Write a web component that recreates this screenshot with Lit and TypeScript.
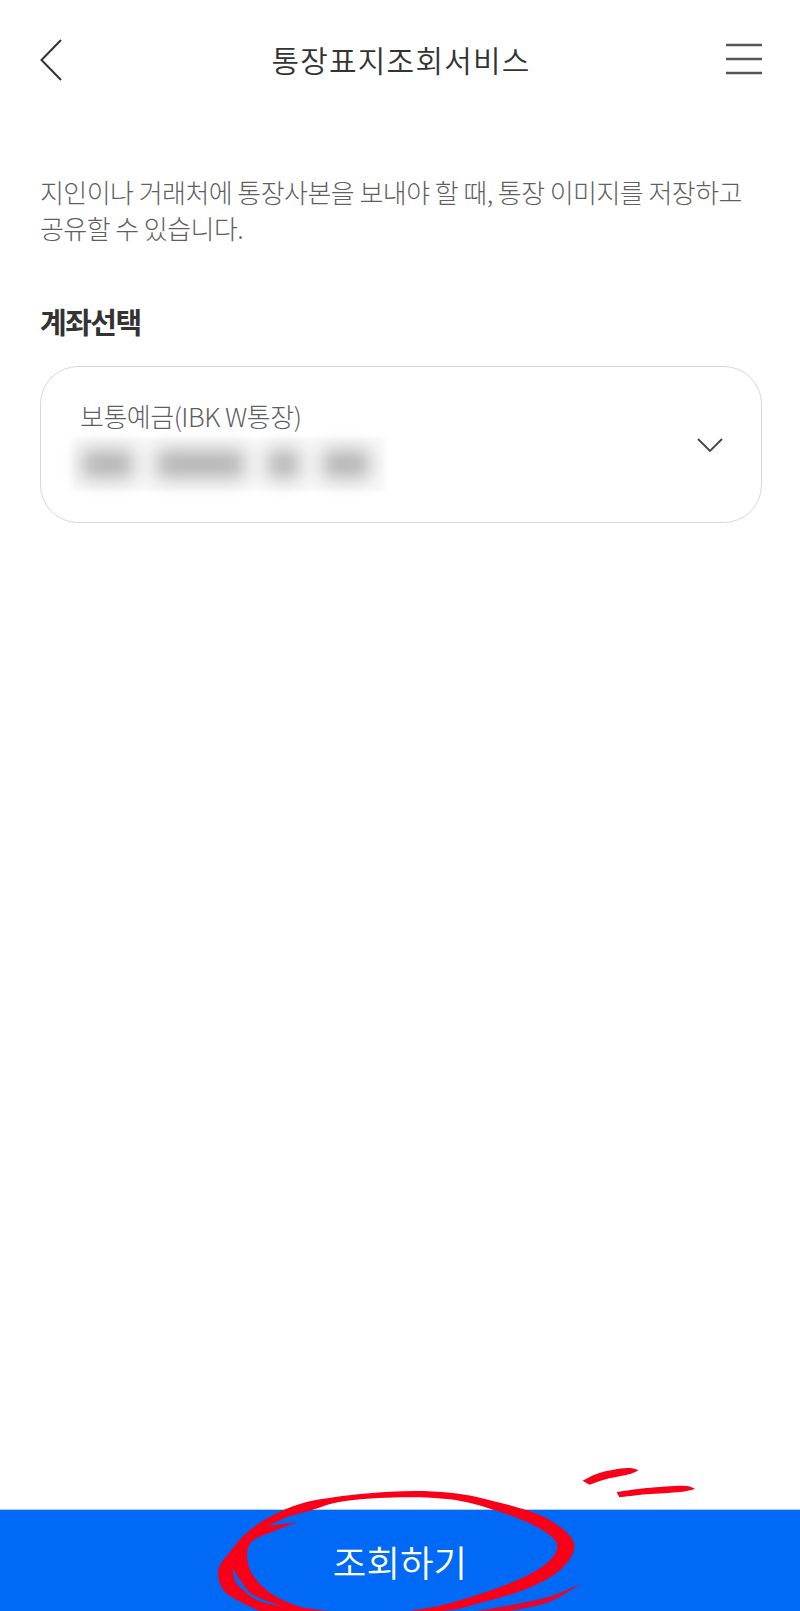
import { LitElement, html, css } from "lit";
import { customElement } from "lit/decorators.js";

type Pt = [number, number];

/** Catmull-Rom segments through the points, as cubic bezier commands. */
function curve(p: Pt[]): string {
  let d = "";
  for (let i = 0; i < p.length - 1; i++) {
    const a = p[Math.max(i - 1, 0)];
    const b = p[i];
    const c = p[i + 1];
    const e = p[Math.min(i + 2, p.length - 1)];
    const c1 = [b[0] + (c[0] - a[0]) / 6, b[1] + (c[1] - a[1]) / 6];
    const c2 = [c[0] - (e[0] - b[0]) / 6, c[1] - (e[1] - b[1]) / 6];
    d += `C${c1[0]} ${c1[1]} ${c2[0]} ${c2[1]} ${c[0]} ${c[1]}`;
  }
  return d;
}

/** Closed shape made of smooth runs joined by straight corners. */
function shape(...runs: Pt[][]): string {
  let d = `M${runs[0][0][0]} ${runs[0][0][1]}`;
  for (const r of runs) {
    d += `L${r[0][0]} ${r[0][1]}` + curve(r);
  }
  return d + "Z";
}

const RING = shape(
  [[180, 513], [130, 490], [70, 450], [55, 390], [90, 335], [150, 270], [240, 215], [360, 178], [570, 155], [750, 158], [900, 188], [1040, 235], [1122, 310], [1080, 390], [970, 450], [800, 500], [730, 513]],
  [[630, 513], [750, 490], [930, 430], [1040, 370], [1070, 310], [1000, 255], [870, 206], [750, 178], [600, 172], [430, 184], [330, 212], [270, 228], [205, 257]],
  [[292, 247], [230, 270], [155, 305], [142, 360], [165, 415], [220, 465], [300, 500], [390, 513]],
);
const SLIVER = shape([[98, 385], [110, 430], [170, 480], [250, 500]], [[250, 500], [160, 465], [120, 420], [98, 385]]);
const TAIL = shape([[1145, 430], [1030, 475], [830, 513]], [[930, 513], [1050, 485], [1145, 430]]);
const DASH_A = shape([[1148, 122], [1200, 98], [1280, 84], [1316, 90]], [[1316, 90], [1290, 102], [1220, 117], [1168, 134]]);
const DASH_B = shape([[1250, 156], [1340, 144], [1450, 137], [1486, 147]], [[1486, 147], [1440, 156], [1340, 163], [1258, 172]]);

@customElement("app-root")
export class AppRoot extends LitElement {
  static styles = css`
    :host {
      display: block;
      position: relative;
      width: 800px;
      height: 1611px;
      background: #fff;
      overflow: hidden;
      font-family: "Noto Sans CJK KR", "Noto Sans", sans-serif;
    }
    .page {
      display: flex;
      flex-direction: column;
      height: 100%;
    }
    .header {
      display: grid;
      grid-template-columns: 1fr auto 1fr;
      align-items: center;
      height: 122px;
      padding: 0 38px 0 40px;
    }
    .header svg {
      display: block;
    }
    .back {
      margin-top: -3px;
    }
    .menu {
      justify-self: end;
      margin-top: -4px;
    }
    .title {
      margin-top: -4px;
      font-size: 30px;
      font-weight: 350;
      color: #333;
      letter-spacing: 1.2px;
    }
    .content {
      flex: 1;
      padding: 52px 38px 0 40px;
    }
    .desc {
      margin: 0;
      font-size: 26px;
      font-weight: 300;
      line-height: 36px;
      color: #5f5f5f;
      letter-spacing: -0.55px;
    }
    .heading {
      margin: 55px 0 0;
      font-size: 29px;
      line-height: 40px;
      font-weight: 700;
      color: #333;
      letter-spacing: -1.5px;
    }
    .card {
      margin-top: 25px;
      height: 157px;
      box-sizing: border-box;
      border: 1.5px solid #d8d8d8;
      border-radius: 38px;
      display: flex;
      align-items: center;
      justify-content: space-between;
      padding: 0 38px 0 39px;
    }
    .type {
      font-size: 26px;
      font-weight: 300;
      line-height: 34px;
      color: #5f5f5f;
      letter-spacing: -0.5px;
    }
    .blur {
      margin: 5px 0 0 -8px;
      width: 313px;
      height: 53px;
      padding-left: 10px;
      box-sizing: border-box;
      background: #f8f8f8;
      filter: blur(2px);
      display: flex;
      align-items: center;
    }
    .blobs {
      display: flex;
      gap: 24px;
      filter: blur(9px);
    }
    .blobs span {
      background: #b4b4b4;
      height: 28px;
    }
    .chevron {
      margin-top: 2px;
    }
    .button {
      height: 102px;
      flex: none;
      background: #0069f5;
      border-top: 1px solid #a9cdf8;
      box-sizing: border-box;
      color: #fff;
      font-size: 36.5px;
      font-weight: 350;
      display: flex;
      align-items: center;
      justify-content: center;
      padding-top: 2px;
    }
    .scribble {
      position: absolute;
      left: 200px;
      top: 1440px;
      width: 520px;
      height: 171px;
      pointer-events: none;
    }
  `;

  render() {
    return html`
      <div class="page">
        <div class="header">
          <svg class="back" width="22" height="42" viewBox="0 0 22 42" fill="none" stroke="#333" stroke-width="2"><path d="M21 1 1.5 21 21 41" /></svg>
          <div class="title">통장표지조회서비스</div>
          <svg class="menu" width="36" height="32" viewBox="0 0 36 32" stroke="#555" stroke-width="2.6"><path d="M0 2h36M0 16h36M0 30h36" /></svg>
        </div>
        <div class="content">
          <p class="desc">지인이나 거래처에 통장사본을 보내야 할 때, 통장 이미지를 저장하고<br />공유할 수 있습니다.</p>
          <h2 class="heading">계좌선택</h2>
          <div class="card">
            <div>
              <div class="type">보통예금(IBK W통장)</div>
              <div class="blur">
                <div class="blobs">
                  <span style="width:51px"></span><span style="width:87px"></span><span style="width:31px"></span><span style="width:46px"></span>
                </div>
              </div>
            </div>
            <svg class="chevron" width="26" height="15" viewBox="0 0 26 15" fill="none" stroke="#444" stroke-width="1.8"><path d="M1 1 13 13 25 1" /></svg>
          </div>
        </div>
        <div class="button">조회하기</div>
      </div>
      <svg class="scribble" viewBox="0 0 1560 513">
        <path d=${RING} fill="#fa0018" />
        <path d=${SLIVER} fill="#0069f5" />
        <path d=${TAIL} fill="#e0082e" />
        <path d=${DASH_A} fill="#fa0018" />
        <path d=${DASH_B} fill="#fa0018" />
      </svg>
    `;
  }
}
